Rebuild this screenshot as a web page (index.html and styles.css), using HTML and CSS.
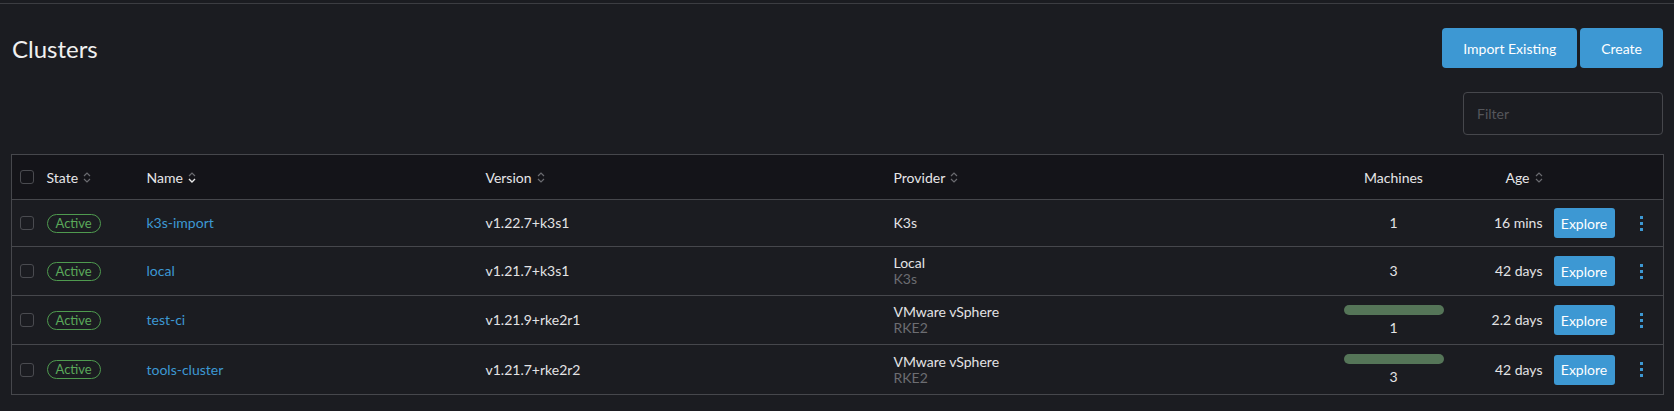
FILE: index.html
```html
<!DOCTYPE html>
<html>
<head>
<meta charset="utf-8">
<link rel="stylesheet" href="styles.css">
</head>
<body>
<div class="topbar"></div>
<main class="page">
  <header class="title-row">
    <h1 class="title">Clusters</h1>
    <div class="actions">
      <button class="btn">Import Existing</button>
      <button class="btn">Create</button>
    </div>
  </header>
  <div class="filter-row">
    <input class="filter" type="text" placeholder="Filter">
  </div>
  <table class="grid">
    <colgroup>
      <col class="c-check"><col class="c-state"><col class="c-name"><col class="c-version"><col class="c-provider"><col class="c-machines"><col class="c-age"><col class="c-explore"><col class="c-menu">
    </colgroup>
    <thead>
      <tr>
        <th><span class="cb"></span></th>
        <th><span class="hcell">State <svg class="sort" viewBox="0 0 8 13" width="8" height="13"><path d="M1 5 L4 2 L7 5 M1 8 L4 11 L7 8" fill="none" stroke="#6a6b70" stroke-width="1.2"/></svg></span></th>
        <th><span class="hcell">Name <svg class="sort" viewBox="0 0 8 13" width="8" height="13"><path d="M1 5 L4 2 L7 5" fill="none" stroke="#6a6b70" stroke-width="1.2"/><path d="M1 8 L4 11 L7 8" fill="none" stroke="#e8e8e8" stroke-width="1.4"/></svg></span></th>
        <th><span class="hcell">Version <svg class="sort" viewBox="0 0 8 13" width="8" height="13"><path d="M1 5 L4 2 L7 5 M1 8 L4 11 L7 8" fill="none" stroke="#6a6b70" stroke-width="1.2"/></svg></span></th>
        <th><span class="hcell">Provider <svg class="sort" viewBox="0 0 8 13" width="8" height="13"><path d="M1 5 L4 2 L7 5 M1 8 L4 11 L7 8" fill="none" stroke="#6a6b70" stroke-width="1.2"/></svg></span></th>
        <th class="center">Machines</th>
        <th class="right"><span class="hcell">Age <svg class="sort" viewBox="0 0 8 13" width="8" height="13"><path d="M1 5 L4 2 L7 5 M1 8 L4 11 L7 8" fill="none" stroke="#6a6b70" stroke-width="1.2"/></svg></span></th>
        <th></th>
        <th></th>
      </tr>
    </thead>
    <tbody>
      <tr>
        <td><span class="cb"></span></td>
        <td><span class="badge">Active</span></td>
        <td><a class="link">k3s-import</a></td>
        <td>v1.22.7+k3s1</td>
        <td>K3s</td>
        <td class="center">1</td>
        <td class="right">16 mins</td>
        <td><button class="explore">Explore</button></td>
        <td><span class="kebab"><i></i><i></i><i></i></span></td>
      </tr>
      <tr>
        <td><span class="cb"></span></td>
        <td><span class="badge">Active</span></td>
        <td><a class="link">local</a></td>
        <td>v1.21.7+k3s1</td>
        <td><div>Local</div><div class="sub">K3s</div></td>
        <td class="center">3</td>
        <td class="right">42 days</td>
        <td><button class="explore">Explore</button></td>
        <td><span class="kebab"><i></i><i></i><i></i></span></td>
      </tr>
      <tr>
        <td><span class="cb"></span></td>
        <td><span class="badge">Active</span></td>
        <td><a class="link">test-ci</a></td>
        <td>v1.21.9+rke2r1</td>
        <td><div>VMware vSphere</div><div class="sub">RKE2</div></td>
        <td class="center"><div class="bar"></div><div class="num">1</div></td>
        <td class="right">2.2 days</td>
        <td><button class="explore">Explore</button></td>
        <td><span class="kebab"><i></i><i></i><i></i></span></td>
      </tr>
      <tr>
        <td><span class="cb"></span></td>
        <td><span class="badge">Active</span></td>
        <td><a class="link">tools-cluster</a></td>
        <td>v1.21.7+rke2r2</td>
        <td><div>VMware vSphere</div><div class="sub">RKE2</div></td>
        <td class="center"><div class="bar"></div><div class="num">3</div></td>
        <td class="right">42 days</td>
        <td><button class="explore">Explore</button></td>
        <td><span class="kebab"><i></i><i></i><i></i></span></td>
      </tr>
    </tbody>
  </table>
</main>
</body>
</html>
```

FILE: styles.css
```css
* { box-sizing: border-box; }
html, body {
  margin: 0;
  background: #1b1c21;
  color: #e3e3e5;
  font-family: Lato, "Open Sans", "Liberation Sans", sans-serif;
  font-size: 14px;
}
.topbar {
  height: 4px;
  border-bottom: 1px solid #3c3d42;
}
.page {
  padding: 0 11px 0 11px;
}
.title-row {
  display: flex;
  justify-content: space-between;
  align-items: center;
  margin-top: 24px;
  height: 40px;
}
.title {
  margin: 0 0 0 1px;
  font-size: 24px;
  font-weight: 400;
  color: #f0f0f0;
}
.actions {
  display: flex;
  gap: 3px;
}
.btn {
  height: 40px;
  padding: 0 21px;
  border: none;
  border-radius: 4px;
  background: #3d98d3;
  color: #fff;
  font-family: inherit;
  font-size: 14px;
}
.filter-row {
  display: flex;
  justify-content: flex-end;
  margin-top: 24px;
}
.filter {
  width: 200px;
  height: 43px;
  border: 1px solid #46474c;
  border-radius: 4px;
  background: transparent;
  padding: 0 13px;
  font-family: inherit;
  font-size: 14px;
  color: #e6e6e8;
}
.filter::placeholder { color: #55565b; }
.grid {
  margin-top: 19px;
  width: 1652px;
  border-collapse: collapse;
  table-layout: fixed;
  border: 1px solid #46474c;
}
.c-check { width: 35px; }
.c-state { width: 100px; }
.c-name { width: 339px; }
.c-version { width: 408px; }
.c-provider { width: 436px; }
.c-machines { width: 128px; }
.c-age { width: 87px; }
.c-explore { width: 80px; }
.c-menu { width: 39px; }
thead tr {
  background: #141419;
  height: 45px;
}
th {
  font-weight: 400;
  text-align: left;
  padding: 0;
  color: #e6e6e8;
  border-bottom: 1px solid #46474c;
}
td {
  padding: 0;
  border-top: 1px solid #46474c;
  vertical-align: middle;
  line-height: 16px;
}
tbody tr { height: 49px; }
tbody tr:first-child { height: 47px; }
tbody tr:last-child { height: 50px; }
.center { text-align: center; }
.right { text-align: right; padding-right: 2px; }
.hcell {
  display: inline-flex;
  align-items: center;
  gap: 5px;
}
.sort { display: block; }
.cb {
  display: block;
  width: 14px;
  height: 14px;
  margin-left: 8px;
  border: 1px solid #4a4b50;
  border-radius: 3px;
}
.badge {
  display: inline-block;
  height: 19px;
  line-height: 17px;
  padding: 0 8px;
  border: 1px solid #4f9a4f;
  border-radius: 10px;
  color: #5aa85a;
  font-size: 13px;
}
.link { color: #3d98d3; }
.sub { color: #6c6d72; }
.bar {
  width: 100px;
  height: 10px;
  margin: 0 auto 5px;
  border-radius: 5px;
  background: #557558;
}
.explore {
  display: block;
  margin-left: 9px;
  width: 61px;
  height: 30px;
  padding: 0;
  border: none;
  border-radius: 3px;
  background: #3d98d3;
  color: #fff;
  font-family: inherit;
  font-size: 14px;
}
.kebab {
  display: flex;
  flex-direction: column;
  align-items: center;
  gap: 3px;
  width: 3px;
  margin-left: 15px;
}
.kebab i {
  display: block;
  width: 3px;
  height: 3px;
  background: #3d98d3;
}
```
